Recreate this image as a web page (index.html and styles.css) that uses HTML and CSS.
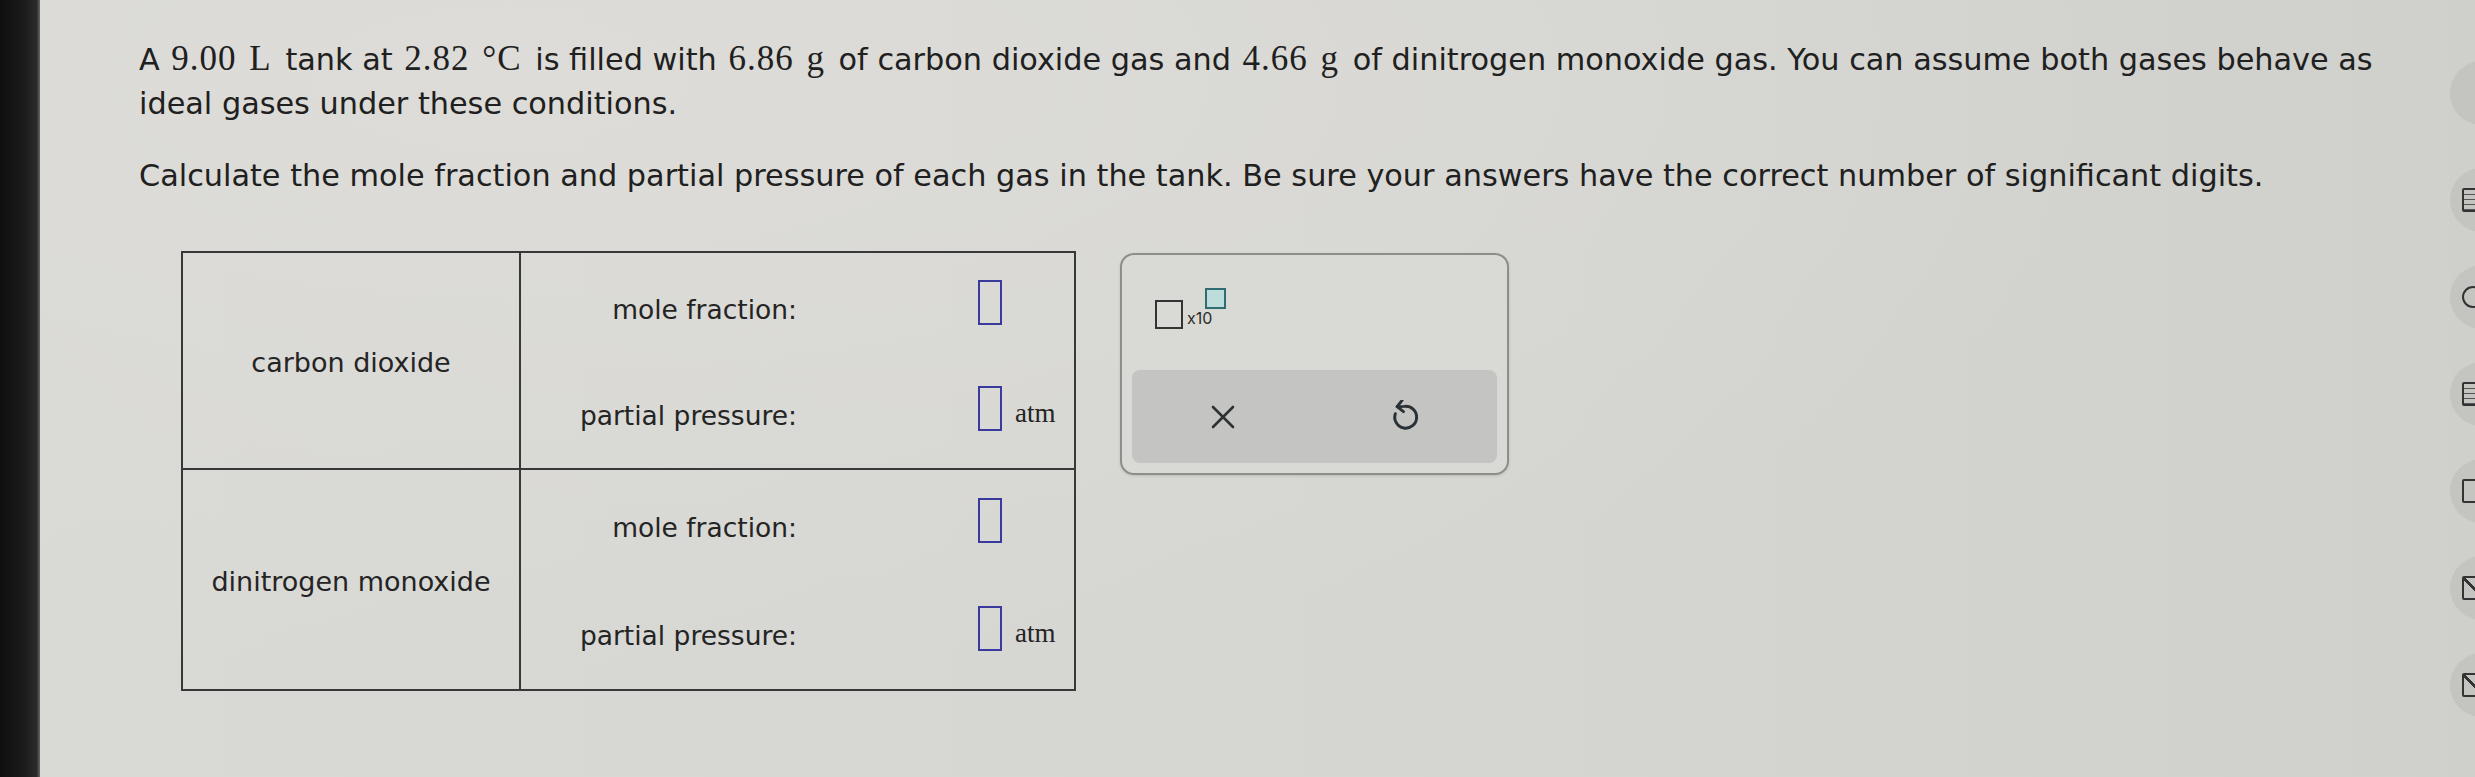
FILE: index.html
```html
<!DOCTYPE html>
<html lang="en">
<head>
<meta charset="utf-8">
<title>Mole fraction and partial pressure</title>
<link rel="stylesheet" href="styles.css">
</head>
<body>
<div class="screen">
  <div class="bezel"></div>
  <main class="main">
    <p class="q">A <span class="m">9.00&nbsp;L</span> tank at <span class="m">2.82&nbsp;°C</span> is filled with <span class="m">6.86&nbsp;g</span> of carbon dioxide gas and <span class="m">4.66&nbsp;g</span> of dinitrogen monoxide gas. You can assume both gases behave as ideal gases under these conditions.</p>
    <p class="q">Calculate the mole fraction and partial pressure of each gas in the tank. Be sure your answers have the correct number of significant digits.</p>

    <div class="work">
      <div class="grid">
        <div class="name top">carbon dioxide</div>
        <div class="fields top">
          <div class="line"><span class="label">mole fraction:</span><span class="ans"><span class="box"></span></span></div>
          <div class="line"><span class="label">partial pressure:</span><span class="ans"><span class="box"></span><span class="unit">atm</span></span></div>
        </div>
        <div class="name">dinitrogen monoxide</div>
        <div class="fields">
          <div class="line"><span class="label">mole fraction:</span><span class="ans"><span class="box"></span></span></div>
          <div class="line"><span class="label">partial pressure:</span><span class="ans"><span class="box"></span><span class="unit">atm</span></span></div>
        </div>
      </div>

      <div class="panel">
        <div class="sci">
          <span class="base"></span><span class="ten">x10</span><span class="exp"></span>
        </div>
        <div class="bar">
          <span class="btn">
            <svg width="26" height="26" viewBox="0 0 26 26"><path d="M3 3 L23 23 M23 3 L3 23" stroke="#2e3134" stroke-width="2.6" stroke-linecap="round" fill="none"/></svg>
          </span>
          <span class="btn">
            <svg width="32" height="34" viewBox="0 0 24 24"><g transform="rotate(38 12 12)" fill="none" stroke="#2a3136" stroke-width="2.2" stroke-linecap="round" stroke-linejoin="round"><polyline points="2 4 2 10 8 10"/><path d="M4.2 15a8.2 8.2 0 1 0 1.94-8.53L2 10"/></g></svg>
          </span>
        </div>
      </div>
    </div>
  </main>
  <aside class="tools">
    <span class="tool first"></span>
    <span class="tool"><span class="ico lines"></span></span>
    <span class="tool"><span class="ico round"></span></span>
    <span class="tool"><span class="ico lines"></span></span>
    <span class="tool"><span class="ico"></span></span>
    <span class="tool"><span class="ico slash"></span></span>
    <span class="tool"><span class="ico slash"></span></span>
  </aside>
</div>
</body>
</html>
```

FILE: styles.css
```css
html, body {
  margin: 0;
  padding: 0;
}

body {
  width: 2475px;
  height: 777px;
  overflow: hidden;
  background: #d6d6d2;
  font-family: "DejaVu Sans", Verdana, sans-serif;
  color: #202020;
}

.screen {
  display: flex;
  height: 777px;
}

.bezel {
  width: 40px;
  flex: none;
  background: linear-gradient(90deg, #0f0f0f 0%, #1b1b1b 60%, #2c2c2c 92%, #6a6a68 100%);
}

.main {
  flex: 1;
  padding: 37px 0 0 99px;
  background:
    radial-gradient(ellipse at 20% 10%, #dddcd8 0%, rgba(221,220,216,0) 60%),
    linear-gradient(90deg, #d9d9d5 0%, #d5d5d1 60%, #d0d0cc 100%);
}

.q {
  margin: 0;
  font-size: 30.3px;
  line-height: 44px;
  max-width: 2262px;
}

.q + .q {
  margin-top: 28px;
}

.m {
  font-family: "Liberation Serif", "Times New Roman", serif;
  font-size: 35px;
  letter-spacing: 1px;
  word-spacing: 3px;
  margin: 0 4px 0 2px;
}

.work {
  display: flex;
  align-items: flex-start;
  gap: 44px;
  margin: 53px 0 0 42px;
}

/* answer table */
.grid {
  display: grid;
  grid-template-columns: 338px 553px;
  grid-template-rows: 217px 219px;
  border: 2px solid #383838;
  font-size: 26.5px;
  color: #242424;
}

.name {
  display: flex;
  align-items: center;
  justify-content: center;
  border-right: 2px solid #383838;
  padding-top: 4px;
  box-sizing: border-box;
  font-size: 27px;
}

.top {
  border-bottom: 2px solid #383838;
  box-sizing: border-box;
}

.fields {
  display: grid;
  grid-template-rows: 1fr 1fr;
  padding-top: 3px;
  box-sizing: border-box;
}

.line {
  display: flex;
  align-items: center;
}

.label {
  width: 276px;
  text-align: right;
  flex: none;
}

.ans {
  display: flex;
  align-items: center;
  gap: 13px;
  margin-left: 181px;
  margin-bottom: 14px;
}

.box {
  width: 24px;
  height: 45px;
  box-sizing: border-box;
  border: 2px solid #3a3a9c;
}

.unit {
  font-family: "Liberation Serif", "Times New Roman", serif;
  font-size: 27px;
  line-height: 27px;
  padding-top: 10px;
}

/* scientific notation panel */
.panel {
  width: 389px;
  height: 222px;
  box-sizing: border-box;
  margin-top: 2px;
  border: 2px solid #8d8d8b;
  border-radius: 14px;
  background: #d9d9d5;
  display: flex;
  flex-direction: column;
  box-shadow: 0 1px 3px rgba(0,0,0,0.12);
}

.sci {
  display: flex;
  align-items: flex-start;
  padding: 45px 0 0 33px;
}

.base {
  width: 28px;
  height: 29px;
  box-sizing: border-box;
  border: 2px solid #333;
  flex: none;
}

.ten {
  font-family: Inter, "Noto Sans", sans-serif;
  font-size: 16px;
  line-height: 16px;
  margin: 10px 0 0 4px;
  color: #2b2b2b;
}

.exp {
  width: 21px;
  height: 21px;
  box-sizing: border-box;
  border: 2px solid #2f6d72;
  background: #bddcdc;
  margin: -12px 0 0 -7px;
  flex: none;
}

.bar {
  margin: auto 10px 10px;
  height: 93px;
  background: #c4c5c2;
  border-radius: 8px;
  display: grid;
  grid-template-columns: 1fr 1fr;
  align-items: center;
  justify-items: center;
}

.btn {
  display: flex;
}

/* right-hand tool column, clipped by the screen edge */
.tools {
  width: 25px;
  flex: none;
  overflow: hidden;
  display: flex;
  flex-direction: column;
  gap: 33px;
  padding-top: 61px;
  box-sizing: border-box;
  background: #cfcfcb;
}

.tool {
  width: 64px;
  height: 64px;
  flex: none;
  border-radius: 50%;
  background: #c4c4c0;
  display: flex;
  align-items: center;
  padding-left: 12px;
  box-sizing: border-box;
}

.tool.first {
  margin-bottom: 10px;
}

.ico {
  width: 22px;
  height: 24px;
  box-sizing: border-box;
  border: 2px solid #333;
  border-radius: 2px;
}

.ico.lines {
  background: repeating-linear-gradient(180deg, transparent 0 4px, #555 4px 5px);
}

.ico.round {
  border-radius: 50%;
  height: 22px;
}

.ico.slash {
  background: linear-gradient(45deg, transparent 46%, #333 46% 56%, transparent 56%);
}
```
